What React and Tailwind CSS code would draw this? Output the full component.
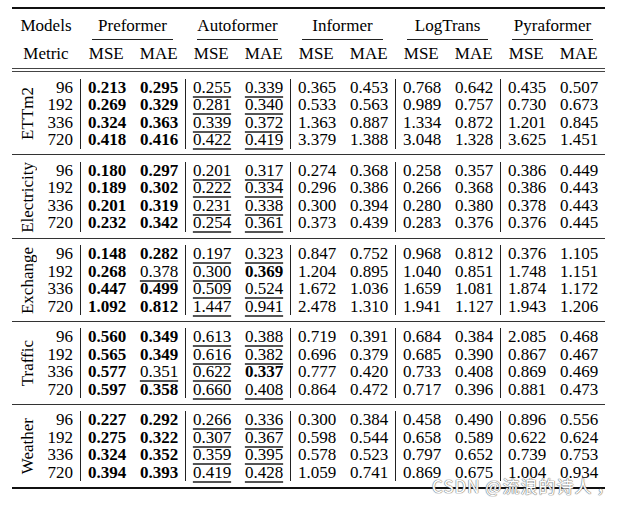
const models = ["Preformer", "Autoformer", "Informer", "LogTrans", "Pyraformer"];

// "*" = bold (best), "_" = underlined (second best)
const groups = [
  {
    name: "ETTm2",
    rows: [
      ["96", "0.213*", "0.295*", "0.255_", "0.339_", "0.365", "0.453", "0.768", "0.642", "0.435", "0.507"],
      ["192", "0.269*", "0.329*", "0.281_", "0.340_", "0.533", "0.563", "0.989", "0.757", "0.730", "0.673"],
      ["336", "0.324*", "0.363*", "0.339_", "0.372_", "1.363", "0.887", "1.334", "0.872", "1.201", "0.845"],
      ["720", "0.418*", "0.416*", "0.422_", "0.419_", "3.379", "1.388", "3.048", "1.328", "3.625", "1.451"],
    ],
  },
  {
    name: "Electricity",
    rows: [
      ["96", "0.180*", "0.297*", "0.201_", "0.317_", "0.274", "0.368", "0.258", "0.357", "0.386", "0.449"],
      ["192", "0.189*", "0.302*", "0.222_", "0.334_", "0.296", "0.386", "0.266", "0.368", "0.386", "0.443"],
      ["336", "0.201*", "0.319*", "0.231_", "0.338_", "0.300", "0.394", "0.280", "0.380", "0.378", "0.443"],
      ["720", "0.232*", "0.342*", "0.254_", "0.361_", "0.373", "0.439", "0.283", "0.376", "0.376", "0.445"],
    ],
  },
  {
    name: "Exchange",
    rows: [
      ["96", "0.148*", "0.282*", "0.197_", "0.323_", "0.847", "0.752", "0.968", "0.812", "0.376", "1.105"],
      ["192", "0.268*", "0.378_", "0.300_", "0.369*", "1.204", "0.895", "1.040", "0.851", "1.748", "1.151"],
      ["336", "0.447*", "0.499*", "0.509_", "0.524_", "1.672", "1.036", "1.659", "1.081", "1.874", "1.172"],
      ["720", "1.092*", "0.812*", "1.447_", "0.941_", "2.478", "1.310", "1.941", "1.127", "1.943", "1.206"],
    ],
  },
  {
    name: "Traffic",
    rows: [
      ["96", "0.560*", "0.349*", "0.613_", "0.388_", "0.719", "0.391", "0.684", "0.384", "2.085", "0.468"],
      ["192", "0.565*", "0.349*", "0.616_", "0.382_", "0.696", "0.379", "0.685", "0.390", "0.867", "0.467"],
      ["336", "0.577*", "0.351_", "0.622_", "0.337*", "0.777", "0.420", "0.733", "0.408", "0.869", "0.469"],
      ["720", "0.597*", "0.358*", "0.660_", "0.408_", "0.864", "0.472", "0.717", "0.396", "0.881", "0.473"],
    ],
  },
  {
    name: "Weather",
    rows: [
      ["96", "0.227*", "0.292*", "0.266_", "0.336_", "0.300", "0.384", "0.458", "0.490", "0.896", "0.556"],
      ["192", "0.275*", "0.322*", "0.307_", "0.367_", "0.598", "0.544", "0.658", "0.589", "0.622", "0.624"],
      ["336", "0.324*", "0.352*", "0.359_", "0.395_", "0.578", "0.523", "0.797", "0.652", "0.739", "0.753"],
      ["720", "0.394*", "0.393*", "0.419_", "0.428_", "1.059", "0.741", "0.869", "0.675", "1.004", "0.934"],
    ],
  },
];

const Value = ({ v }) => {
  if (v.endsWith("*")) return <span className="font-bold">{v.slice(0, -1)}</span>;
  if (v.endsWith("_"))
    return (
      <span className="underline decoration-[1.5px] decoration-[#555] underline-offset-[3px]">
        {v.slice(0, -1)}
      </span>
    );
  return <span>{v}</span>;
};

const Group = ({ group, last }) => (
  <div
    className={
      last
        ? "pt-[6.5px] pb-[5.5px] border-b-2 border-[#111]"
        : "pt-[6.5px] pb-[5.5px] border-b border-[#333]"
    }
  >
    <div className="flex">
      <div className="w-[30px] flex items-center justify-center">
        <span className="[writing-mode:vertical-rl] rotate-180 leading-[17px]">{group.name}</span>
      </div>
      <div className="w-[38px] pr-[7px] text-right">
        {group.rows.map((r) => (
          <div key={r[0]} className="h-[17.5px] leading-[17.5px]">
            {r[0]}
          </div>
        ))}
      </div>
      {models.map((m, mi) => (
        <div key={m} className="w-[105px] border-l border-[#222]">
          {group.rows.map((r) => (
            <div key={r[0]} className="flex h-[17.5px] leading-[17.5px]">
              <div className="w-[52.5px] text-center">
                <Value v={r[1 + mi * 2]} />
              </div>
              <div className="w-[52.5px] text-center">
                <Value v={r[2 + mi * 2]} />
              </div>
            </div>
          ))}
        </div>
      ))}
    </div>
  </div>
);

export default function App() {
  return (
    <div className="relative w-[631px] h-[506px] bg-white overflow-hidden text-black font-['Liberation_Serif',serif] text-[17px]">
      <div className="ml-[12px] mt-[7px] w-[593px] border-t-2 border-[#111]">
        {/* header: model names */}
        <div className="flex">
          <div className="w-[68px] pt-[7.5px] leading-[17px] text-center">Models</div>
          {models.map((m) => (
            <div key={m} className="w-[105px] flex flex-col">
              <div className="pt-[7.5px] pb-[5.5px] leading-[17px] text-center">{m}</div>
              <div className="mx-3 h-px bg-[#222]" />
            </div>
          ))}
        </div>
        {/* header: metrics */}
        <div className="flex pt-[4.5px] pb-[6.5px] leading-[17px]">
          <div className="w-[68px] text-center">Metric</div>
          {models.map((m) => (
            <div key={m} className="w-[105px] flex">
              <div className="w-[52.5px] text-center">MSE</div>
              <div className="w-[52.5px] text-center">MAE</div>
            </div>
          ))}
        </div>
        <div className="h-[4px] border-t border-b border-[#444]" />
        {groups.map((g, i) => (
          <Group key={g.name} group={g} last={i === groups.length - 1} />
        ))}
      </div>
      <div className="absolute left-[432px] top-[475px] flex items-center whitespace-nowrap text-white text-[17px] leading-[22px] tracking-[1px] font-['Noto_Sans_CJK_SC',sans-serif] [text-shadow:0_0_1px_#777,0_0_1px_#777,0_0_1px_#777]">
        <span>CSDN @流浪的诗人</span>
        <span className="ml-[4px]">，</span>
      </div>
    </div>
  );
}
